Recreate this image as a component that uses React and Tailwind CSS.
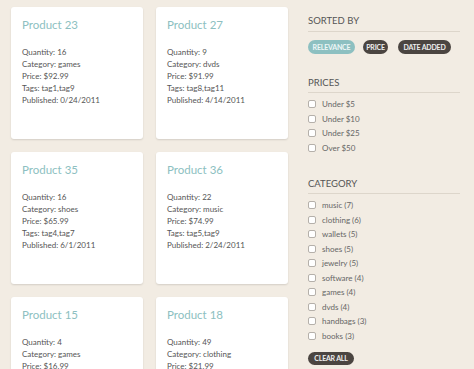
import React from 'react';

const products = [
  { id: 23, qty: 16, cat: 'games', price: '$92.99', tags: 'tag1,tag9', date: '0/24/2011' },
  { id: 27, qty: 9, cat: 'dvds', price: '$91.99', tags: 'tag8,tag11', date: '4/14/2011' },
  { id: 35, qty: 16, cat: 'shoes', price: '$65.99', tags: 'tag4,tag7', date: '6/1/2011' },
  { id: 36, qty: 22, cat: 'music', price: '$74.99', tags: 'tag5,tag9', date: '2/24/2011' },
  { id: 15, qty: 4, cat: 'games', price: '$16.99', tags: 'tag2,tag6', date: '3/12/2011' },
  { id: 18, qty: 49, cat: 'clothing', price: '$21.99', tags: 'tag3,tag10', date: '5/9/2011' },
];

const prices = ['Under $5', 'Under $10', 'Under $25', 'Over $50'];

const categories = [
  'music (7)', 'clothing (6)', 'wallets (5)', 'shoes (5)', 'jewelry (5)',
  'software (4)', 'games (4)', 'dvds (4)', 'handbags (3)', 'books (3)',
];

function ProductCard({ p }) {
  return (
    <div className="w-[132px] h-[132px] bg-white rounded-[3px] shadow-[0_1px_2px_rgba(0,0,0,0.13)] px-[11px] pt-[10px]">
      <h2 className="text-[11.5px] leading-[15px] text-[#8dbfc1] mb-[14px]">Product {p.id}</h2>
      <div className="text-[8px] leading-[12px] text-[#555]">
        <div>Quantity: {p.qty}</div>
        <div>Category: {p.cat}</div>
        <div>Price: {p.price}</div>
        <div>Tags: {p.tags}</div>
        <div>Published: {p.date}</div>
      </div>
    </div>
  );
}

function Check({ label }) {
  return (
    <label className="flex items-center h-[14.5px] text-[8px] text-[#666]">
      <span className="w-[8px] h-[8px] rounded-[2px] border border-[#b5b0aa] bg-white mr-[6px]" />
      {label}
    </label>
  );
}

function Heading({ children, className = '' }) {
  return (
    <h3 className={'text-[9.5px] leading-[13px] text-[#555] pb-[3px] border-b border-[#ddd6cb] ' + className}>
      {children}
    </h3>
  );
}

export default function App() {
  return (
    <div className="w-[474px] h-[369px] overflow-hidden bg-[#f2ece3] flex" style={{ fontFamily: 'Lato, "Open Sans", sans-serif' }}>
      <div className="pl-[11px] pt-[7px] grid grid-cols-[132px_132px] gap-[13px] content-start">
        {products.map(p => (
          <ProductCard key={p.id} p={p} />
        ))}
      </div>
      <aside className="ml-[20px] w-[152px] pt-[14px]">
        <Heading className="pb-[4px]">SORTED BY</Heading>
        <div className="flex mt-[8px] text-[7px] font-bold tracking-[-0.2px]">
          <button className="w-[47px] h-[14px] rounded-full bg-[#8dc0c1] text-[#eef7f7]">RELEVANCE</button>
          <button className="ml-[8px] w-[25px] h-[14px] rounded-full bg-[#4b4541] text-[#eee]">PRICE</button>
          <button className="ml-[10px] w-[53px] h-[14px] rounded-full bg-[#4b4541] text-[#eee]">DATE ADDED</button>
        </div>

        <Heading className="mt-[22px]">PRICES</Heading>
        <div className="mt-[4px]">
          {prices.map(l => <Check key={l} label={l} />)}
        </div>

        <Heading className="mt-[22px]">CATEGORY</Heading>
        <div className="mt-[4px]">
          {categories.map(l => <Check key={l} label={l} />)}
        </div>
        <button className="mt-[5px] w-[46px] h-[13px] rounded-full bg-[#4b4541] text-[#eee] text-[7px] font-bold tracking-[-0.2px]">CLEAR ALL</button>
      </aside>
    </div>
  );
}
